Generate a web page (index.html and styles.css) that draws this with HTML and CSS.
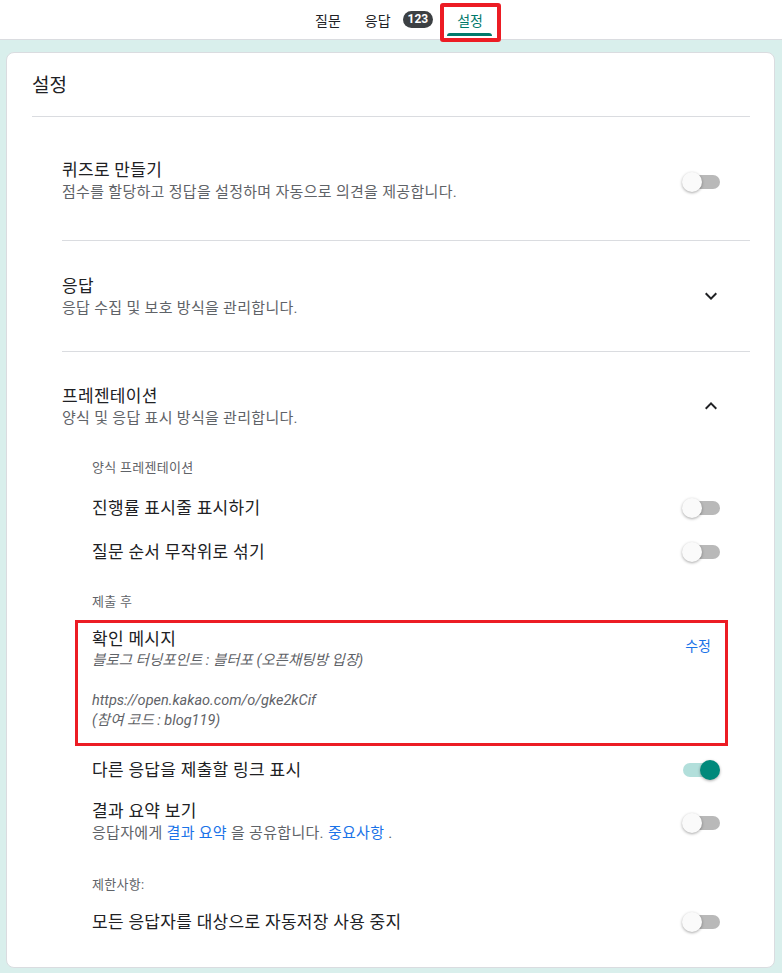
FILE: index.html
```html
<!DOCTYPE html>
<html lang="ko">
<head>
    <meta charset="UTF-8">
    <meta name="viewport" content="width=device-width, initial-scale=1.0">
    <title>설정</title>
    <link rel="stylesheet" href="styles.css">
</head>
<body>

    <div class="topbar">
        <div class="tab">질문</div>
        <div class="tab">응답<span class="badge">123</span></div>
        <div class="tab tab-active">설정<span class="mark-tab"></span></div>
    </div>

    <div class="card">
        <div class="card-head">설정</div>

        <div class="sections">
            <div class="section section-first">
                <div class="section-text">
                    <div class="s-title">퀴즈로 만들기</div>
                    <div class="s-desc">점수를 할당하고 정답을 설정하며 자동으로 의견을 제공합니다.</div>
                </div>
                <span class="toggle"><span class="track"></span><span class="thumb"></span></span>
            </div>

            <div class="section">
                <div class="section-text">
                    <div class="s-title">응답</div>
                    <div class="s-desc">응답 수집 및 보호 방식을 관리합니다.</div>
                </div>
                <svg class="chevron" width="24" height="24" viewBox="0 0 24 24"><path d="M16.59 8.59L12 13.17 7.41 8.59 6 10l6 6 6-6z"/></svg>
            </div>

            <div class="section-open">
                <div class="section-row">
                    <div class="section-text">
                        <div class="s-title">프레젠테이션</div>
                        <div class="s-desc">양식 및 응답 표시 방식을 관리합니다.</div>
                    </div>
                    <svg class="chevron" width="24" height="24" viewBox="0 0 24 24"><path d="M12 8l-6 6 1.41 1.41L12 10.83l4.59 4.58L18 14z"/></svg>
                </div>

                <div class="sub-items">
                    <div class="label label-first">양식 프레젠테이션</div>
                    <div class="row">
                        <span>진행률 표시줄 표시하기</span>
                        <span class="toggle"><span class="track"></span><span class="thumb"></span></span>
                    </div>
                    <div class="row">
                        <span>질문 순서 무작위로 섞기</span>
                        <span class="toggle"><span class="track"></span><span class="thumb"></span></span>
                    </div>

                    <div class="label label-submit">제출 후</div>
                    <div class="confirm">
                        <div class="confirm-text">
                            <div class="s-title">확인 메시지</div>
                            <div class="confirm-msg">
                                블로그 터닝포인트 : 블터포 (오픈채팅방 입장)<br>
                                <br>
                                https://open.kakao.com/o/gke2kCif<br>
                                (참여 코드 : blog119)
                            </div>
                        </div>
                        <span class="edit">수정</span>
                    </div>

                    <div class="row">
                        <span>다른 응답을 제출할 링크 표시</span>
                        <span class="toggle toggle-on"><span class="track"></span><span class="thumb"></span></span>
                    </div>
                    <div class="row row-tall">
                        <div>
                            <div class="s-title">결과 요약 보기</div>
                            <div class="s-desc">응답자에게 <span class="link">결과 요약</span> 을 공유합니다. <span class="link">중요사항</span> .</div>
                        </div>
                        <span class="toggle"><span class="track"></span><span class="thumb"></span></span>
                    </div>

                    <div class="label label-limit">제한사항:</div>
                    <div class="row">
                        <span>모든 응답자를 대상으로 자동저장 사용 중지</span>
                        <span class="toggle"><span class="track"></span><span class="thumb"></span></span>
                    </div>
                </div>
            </div>
        </div>
    </div>

</body>
</html>
```

FILE: styles.css
```css
html {
  font-family: Roboto, "Noto Sans CJK KR", sans-serif;
}

body {
  margin: 0;
  background-color: #d9efec;
  color: #202124;
}

.topbar {
  display: flex;
  justify-content: center;
  height: 39px;
  padding-left: 16px;
  background-color: #fff;
  border-bottom: 1px solid #dadce0;
}

.tab {
  position: relative;
  display: flex;
  align-items: center;
  padding: 0 12px;
  font-size: 14px;
  color: #202124;
}

.badge {
  margin-left: 12px;
  padding: 0 5px;
  height: 17px;
  line-height: 17px;
  border-radius: 9px;
  background-color: #3c4043;
  color: #fff;
  font-size: 12px;
  font-weight: bold;
}

.tab-active {
  color: #00796b;
}

.tab-active::after {
  content: '';
  position: absolute;
  left: 2px;
  right: 3px;
  bottom: 3px;
  height: 3px;
  border-radius: 3px 3px 0 0;
  background-color: #00796b;
}

/* red highlight drawn over the tab */
.mark-tab {
  position: absolute;
  left: -5px;
  right: -6px;
  top: 3px;
  height: 39px;
  box-sizing: border-box;
  border: 4px solid #ec1c24;
  border-radius: 3px;
}

.card {
  margin: 12px 7px 0 6px;
  padding: 19px 24px 25px 25px;
  background-color: #fff;
  border: 1px solid #dadce0;
  border-radius: 8px;
}

.card-head {
  font-size: 19px;
  line-height: 28px;
  padding-bottom: 16px;
  border-bottom: 1px solid #dadce0;
}

.sections {
  margin-left: 30px;
}

.section {
  display: flex;
  align-items: center;
  justify-content: space-between;
  padding: 33px 0 33px;
  border-bottom: 1px solid #dadce0;
}

.section-first {
  padding: 41px 0 38px;
}

.section-open {
  padding-top: 32px;
}

.section-row {
  display: flex;
  align-items: center;
  justify-content: space-between;
}

.s-title {
  font-size: 17px;
  line-height: 24px;
  letter-spacing: 0.3px;
  color: #202124;
}

.s-desc {
  font-size: 15px;
  line-height: 20px;
  letter-spacing: 0.3px;
  color: #5f6368;
}

.chevron {
  margin-right: 27px;
  fill: #202124;
}

.section > .toggle {
  margin-right: 30px;
}

.sub-items {
  padding: 0 30px;
}

.label {
  font-size: 13px;
  line-height: 16px;
  color: #5f6368;
  letter-spacing: 0.3px;
}

.label-first {
  margin: 32px 0 8px;
}

.label-submit {
  margin: 22px 0 10px;
}

.label-limit {
  margin: 26px 0 5px;
}

.row {
  display: flex;
  align-items: center;
  justify-content: space-between;
  height: 44px;
  font-size: 17px;
  letter-spacing: 0.3px;
  color: #202124;
}

.row-tall {
  height: auto;
  padding: 9px 0 8px;
}

.confirm {
  display: flex;
  justify-content: space-between;
  margin: 0 -8px 0 -17px;
  padding: 4px 14px 12px;
  border: 3px solid #ec1c24;
}

.confirm-msg {
  font-size: 14.5px;
  line-height: 20px;
  font-style: italic;
  color: #5f6368;
}

.edit {
  margin-top: 9px;
  font-size: 14px;
  line-height: 20px;
  height: 20px;
  color: #1a73e8;
}

.link {
  color: #1a73e8;
}

.toggle {
  position: relative;
  flex: none;
  width: 38px;
  height: 20px;
  margin-top: 3px;
}

.toggle .track {
  position: absolute;
  left: 3px;
  right: 0;
  top: 3px;
  height: 14px;
  border-radius: 7px;
  background-color: #b9b9b9;
}

.toggle .thumb {
  position: absolute;
  left: 0;
  top: 0;
  width: 20px;
  height: 20px;
  border-radius: 50%;
  background-color: #fafafa;
  box-shadow: 0 1px 3px rgba(0, 0, 0, 0.35);
}

.toggle-on .track {
  left: 1px;
  right: 4px;
  background-color: #b2dfdb;
}

.toggle-on .thumb {
  left: 18px;
  background-color: #00897b;
}
```
